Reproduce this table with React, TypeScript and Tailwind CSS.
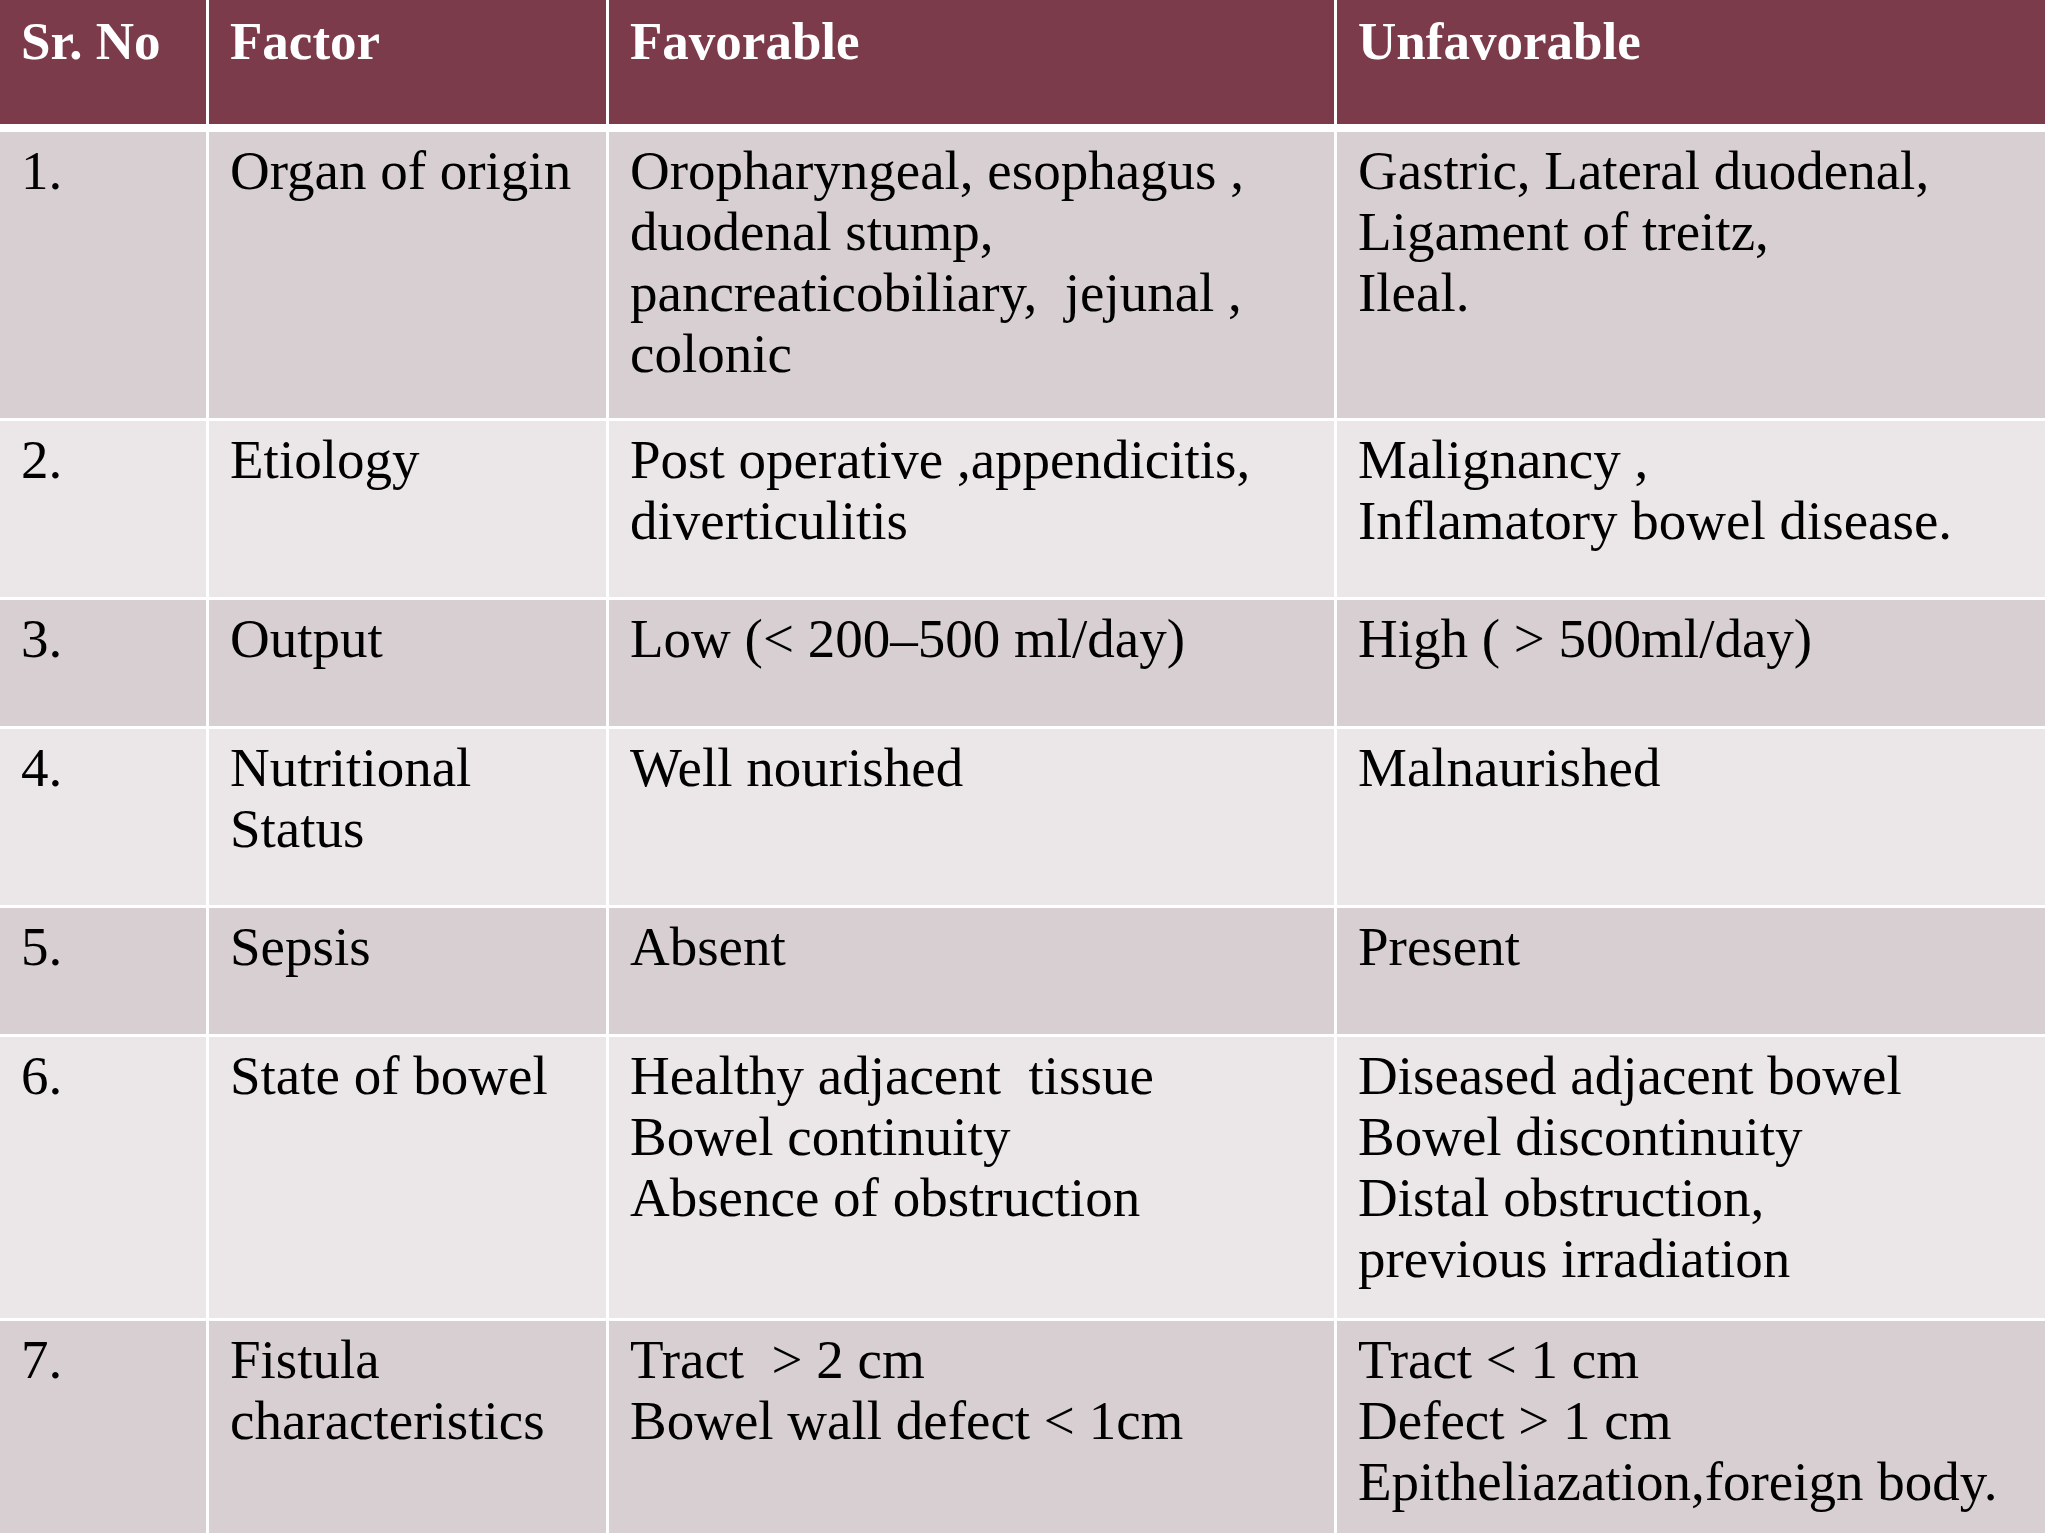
type Row = {
  no: string;
  factor: string[];
  favorable: string[];
  unfavorable: string[];
};

const rows: Row[] = [
  {
    no: "1.",
    factor: ["Organ of origin"],
    favorable: [
      "Oropharyngeal, esophagus ,",
      "duodenal stump,",
      "pancreaticobiliary,  jejunal ,",
      "colonic",
    ],
    unfavorable: ["Gastric, Lateral duodenal,", "Ligament of treitz,", "Ileal."],
  },
  {
    no: "2.",
    factor: ["Etiology"],
    favorable: ["Post operative ,appendicitis,", "diverticulitis"],
    unfavorable: ["Malignancy ,", "Inflamatory bowel disease."],
  },
  {
    no: "3.",
    factor: ["Output"],
    favorable: ["Low (< 200–500 ml/day)"],
    unfavorable: ["High ( > 500ml/day)"],
  },
  {
    no: "4.",
    factor: ["Nutritional", "Status"],
    favorable: ["Well nourished"],
    unfavorable: ["Malnaurished"],
  },
  {
    no: "5.",
    factor: ["Sepsis"],
    favorable: ["Absent"],
    unfavorable: ["Present"],
  },
  {
    no: "6.",
    factor: ["State of bowel"],
    favorable: ["Healthy adjacent  tissue", "Bowel continuity", "Absence of obstruction"],
    unfavorable: [
      "Diseased adjacent bowel",
      "Bowel discontinuity",
      "Distal obstruction,",
      "previous irradiation",
    ],
  },
  {
    no: "7.",
    factor: ["Fistula", "characteristics"],
    favorable: ["Tract  > 2 cm", "Bowel wall defect < 1cm"],
    unfavorable: ["Tract < 1 cm", "Defect > 1 cm", "Epitheliazation,foreign body."],
  },
];

const headers = ["Sr. No", "Factor", "Favorable", "Unfavorable"];

function Cell({ lines, dark }: { lines: string[]; dark: boolean }) {
  return (
    <div
      className={`pl-[21px] pt-[8px] text-[55px] leading-[61px] text-black whitespace-pre ${
        dark ? "bg-[#d7cfd1]" : "bg-[#ebe7e8]"
      }`}
    >
      {lines.map((l, i) => (
        <div key={i}>{l}</div>
      ))}
    </div>
  );
}

export default function App() {
  return (
    <div className="w-[2048px] h-[1536px] overflow-hidden bg-white font-['Liberation_Serif',serif]">
      <div className="grid grid-cols-[206px_397px_725px_708px] grid-rows-[129px_286px_176px_126px_176px_126px_281px_212px] gap-[3px]">
        {headers.map((h) => (
          <div key={h} className="bg-white">
            <div className="h-[124px] bg-[#7b3b4b] pl-[21px] pt-[11px] text-[53px] leading-[61px] font-bold text-white whitespace-pre">
              {h}
            </div>
          </div>
        ))}
        {rows.map((r, i) => {
          const dark = i % 2 === 0;
          return [
            <Cell key={`${r.no}-a`} lines={[r.no]} dark={dark} />,
            <Cell key={`${r.no}-b`} lines={r.factor} dark={dark} />,
            <Cell key={`${r.no}-c`} lines={r.favorable} dark={dark} />,
            <Cell key={`${r.no}-d`} lines={r.unfavorable} dark={dark} />,
          ];
        })}
      </div>
    </div>
  );
}
